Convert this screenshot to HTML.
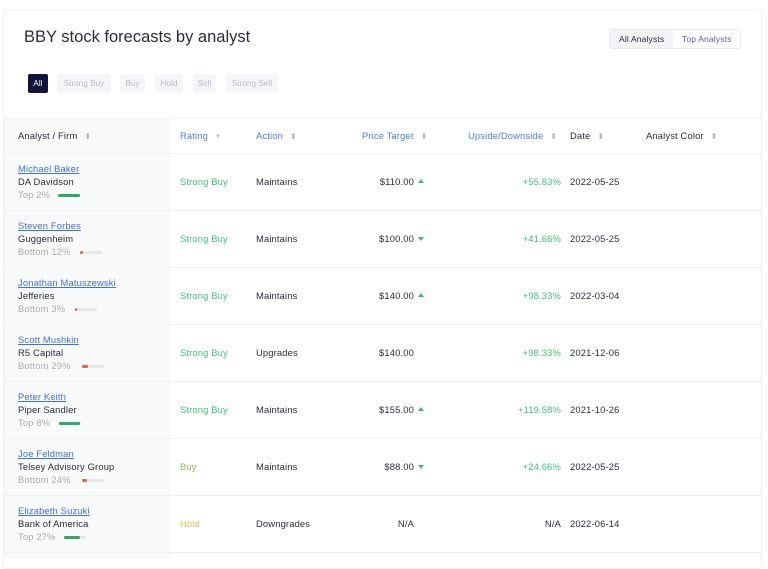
<!DOCTYPE html><html><head><style>
*{margin:0;padding:0;box-sizing:border-box}
body{width:768px;height:558px;overflow:hidden;background:#fff;font-family:"Liberation Sans",sans-serif;font-size:9.4px;letter-spacing:0.15px;color:#2a2c3a;position:relative}
.card{position:absolute;left:3px;top:9px;width:759px;height:560px;border:1px solid #eef0f2;border-radius:3px;background:#fff}
.a{position:absolute;white-space:nowrap;margin-top:-1.5px}
h1{position:absolute;left:24px;top:28px;font-size:16.5px;letter-spacing:0;font-weight:normal;color:#2a2c3a}
.chip{position:absolute;top:74px;height:19px;line-height:19px;font-size:8px;letter-spacing:0.1px;color:#b8bbc2;background:#f5f6f7;border-radius:2px;text-align:center}
.leftbg{position:absolute;left:4px;top:118px;width:166px;height:440px;background:#f8f9f9}
.hl{position:absolute;left:4px;width:757px;height:1px;background:#eef0f2}
.hd{position:absolute;top:130px}
.blue{color:#4a7cf0}
.sort{display:inline-block;margin-left:7px;color:#b0b3b8;font-size:8px;vertical-align:0}
.nm{color:#3f6fe8;text-decoration:underline}
.gr{color:#a9acb2}
.g{color:#3fbf7f}
.bar{position:absolute;height:3px;width:22px;background:#e6e7e9;border-radius:2px}
.bar i{position:absolute;left:0;top:0;height:3px;border-radius:2px}
.up,.dn{position:absolute;width:0;height:0;border-left:3px solid transparent;border-right:3px solid transparent}
.up{border-bottom:4px solid #3fb878}.dn{border-top:4px solid #3fb878}
</style></head><body>
<div class="card"></div>
<h1>BBY stock forecasts by analyst</h1>
<div style="position:absolute;left:609px;top:29px;width:132px;height:20px;border:1px solid #e6e8ec;border-radius:3px"></div>
<div style="position:absolute;left:610px;top:30px;width:63px;height:18px;background:#f2f3f5"></div>
<div class="a" style="left:619px;top:35px;font-size:8.5px;color:#2a2c3a">All Analysts</div>
<div class="a" style="left:682px;top:35px;font-size:8.5px;color:#5a5fb0">Top Analysts</div>
<div class="chip" style="left:28px;width:20px;background:#14143a;color:#fff">All</div>
<div class="chip" style="left:57px;width:54px">Strong Buy</div>
<div class="chip" style="left:120px;width:25px">Buy</div>
<div class="chip" style="left:155px;width:28px">Hold</div>
<div class="chip" style="left:193px;width:23px">Sell</div>
<div class="chip" style="left:226px;width:52px">Strong Sell</div>
<div class="leftbg"></div>
<div class="hl" style="top:118px"></div><div class="hl" style="top:153px"></div>
<div class="hd" style="left:18px">Analyst / Firm<span class="sort">⬍</span></div>
<div class="hd blue" style="left:180px">Rating<span class="sort" style="font-size:6px;vertical-align:1px">▼</span></div>
<div class="hd blue" style="left:256px">Action<span class="sort">⬍</span></div>
<div class="hd blue" style="left:362px">Price Target<span class="sort">⬍</span></div>
<div class="hd blue" style="left:468px">Upside/Downside<span class="sort">⬍</span></div>
<div class="hd" style="left:570px">Date<span class="sort">⬍</span></div>
<div class="hd" style="left:646px">Analyst Color<span class="sort">⬍</span></div>

<div class="a nm" style="left:18px;top:164px">Michael Baker</div><div class="a" style="left:18px;top:177px">DA Davidson</div><div class="a gr" style="left:18px;top:190px">Top 2%</div><div class="bar" style="left:58px;top:194px"><i style="width:22px;background:#2fa66a"></i></div>
<div class="a g" style="left:180px;top:177px">Strong Buy</div><div class="a" style="left:256px;top:177px">Maintains</div><div class="a" style="left:340px;top:177px;width:74px;text-align:right">$110.00</div><div class="up" style="left:418px;top:179px"></div><div class="a g" style="left:470px;top:177px;width:91px;text-align:right">+55.83%</div><div class="a" style="left:570px;top:177px">2022-05-25</div>
<div class="hl" style="top:210px"></div>

<div class="a nm" style="left:18px;top:221px">Steven Forbes</div><div class="a" style="left:18px;top:234px">Guggenheim</div><div class="a gr" style="left:18px;top:247px">Bottom 12%</div><div class="bar" style="left:80px;top:251px"><i style="width:3px;background:#e8604c"></i></div>
<div class="a g" style="left:180px;top:234px">Strong Buy</div><div class="a" style="left:256px;top:234px">Maintains</div><div class="a" style="left:340px;top:234px;width:74px;text-align:right">$100.00</div><div class="dn" style="left:418px;top:237px"></div><div class="a g" style="left:470px;top:234px;width:91px;text-align:right">+41.66%</div><div class="a" style="left:570px;top:234px">2022-05-25</div>
<div class="hl" style="top:267px"></div>

<div class="a nm" style="left:18px;top:278px">Jonathan Matuszewski</div><div class="a" style="left:18px;top:291px">Jefferies</div><div class="a gr" style="left:18px;top:304px">Bottom 3%</div><div class="bar" style="left:75px;top:308px"><i style="width:2px;background:#e8604c"></i></div>
<div class="a g" style="left:180px;top:291px">Strong Buy</div><div class="a" style="left:256px;top:291px">Maintains</div><div class="a" style="left:340px;top:291px;width:74px;text-align:right">$140.00</div><div class="up" style="left:418px;top:293px"></div><div class="a g" style="left:470px;top:291px;width:91px;text-align:right">+98.33%</div><div class="a" style="left:570px;top:291px">2022-03-04</div>
<div class="hl" style="top:324px"></div>

<div class="a nm" style="left:18px;top:335px">Scott Mushkin</div><div class="a" style="left:18px;top:348px">R5 Capital</div><div class="a gr" style="left:18px;top:361px">Bottom 29%</div><div class="bar" style="left:82px;top:365px"><i style="width:6px;background:#e8604c"></i></div>
<div class="a g" style="left:180px;top:348px">Strong Buy</div><div class="a" style="left:256px;top:348px">Upgrades</div><div class="a" style="left:340px;top:348px;width:74px;text-align:right">$140.00</div><div class="a g" style="left:470px;top:348px;width:91px;text-align:right">+98.33%</div><div class="a" style="left:570px;top:348px">2021-12-06</div>
<div class="hl" style="top:381px"></div>

<div class="a nm" style="left:18px;top:392px">Peter Keith</div><div class="a" style="left:18px;top:405px">Piper Sandler</div><div class="a gr" style="left:18px;top:418px">Top 8%</div><div class="bar" style="left:59px;top:422px"><i style="width:21px;background:#2fa66a"></i></div>
<div class="a g" style="left:180px;top:405px">Strong Buy</div><div class="a" style="left:256px;top:405px">Maintains</div><div class="a" style="left:340px;top:405px;width:74px;text-align:right">$155.00</div><div class="up" style="left:418px;top:407px"></div><div class="a g" style="left:470px;top:405px;width:91px;text-align:right">+119.58%</div><div class="a" style="left:570px;top:405px">2021-10-26</div>
<div class="hl" style="top:438px"></div>

<div class="a nm" style="left:18px;top:449px">Joe Feldman</div><div class="a" style="left:18px;top:462px">Telsey Advisory Group</div><div class="a gr" style="left:18px;top:475px">Bottom 24%</div><div class="bar" style="left:82px;top:479px"><i style="width:5px;background:#e8604c"></i></div>
<div class="a" style="left:180px;top:462px;color:#8fbf4a">Buy</div><div class="a" style="left:256px;top:462px">Maintains</div><div class="a" style="left:340px;top:462px;width:74px;text-align:right">$88.00</div><div class="dn" style="left:418px;top:465px"></div><div class="a g" style="left:470px;top:462px;width:91px;text-align:right">+24.66%</div><div class="a" style="left:570px;top:462px">2022-05-25</div>
<div class="hl" style="top:495px"></div>

<div class="a nm" style="left:18px;top:506px">Elizabeth Suzuki</div><div class="a" style="left:18px;top:519px">Bank of America</div><div class="a gr" style="left:18px;top:532px">Top 27%</div><div class="bar" style="left:64px;top:536px"><i style="width:16px;background:#2fa66a"></i></div>
<div class="a" style="left:180px;top:519px;color:#f5b84a">Hold</div><div class="a" style="left:256px;top:519px">Downgrades</div><div class="a" style="left:340px;top:519px;width:74px;text-align:right">N/A</div><div class="a" style="left:470px;top:519px;width:91px;text-align:right">N/A</div><div class="a" style="left:570px;top:519px">2022-06-14</div>
<div class="hl" style="top:552px"></div>
</body></html>
